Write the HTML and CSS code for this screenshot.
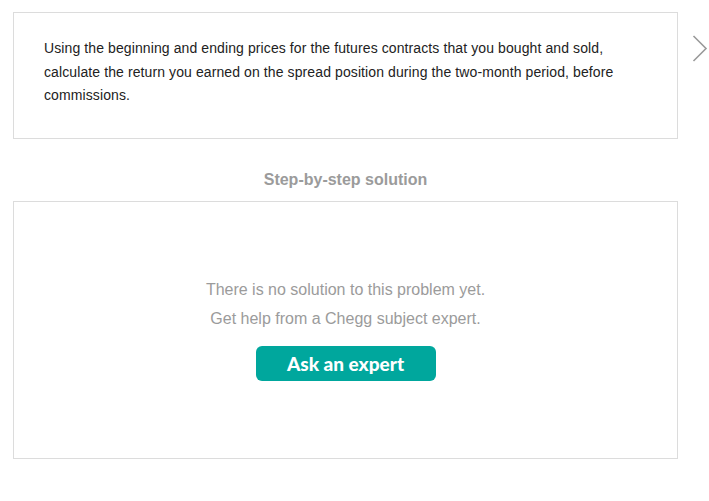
FILE: index.html
```html
<!DOCTYPE html>
<html>
<head>
<meta charset="utf-8">
<link rel="stylesheet" href="styles.css">
</head>
<body>
<div class="page">
  <div class="row">
    <div class="question">
      <p>Using the beginning and ending prices for the futures contracts that you bought and sold, calculate the return you earned on the spread position during the two-month period, before commissions.</p>
    </div>
    <svg class="chevron" width="16" height="27" viewBox="0 0 16 27"><path d="M1.5 1 L14 13.5 L1.5 26" fill="none" stroke="#9a9a9a" stroke-width="1.6"/></svg>
  </div>
  <h2 class="heading">Step-by-step solution</h2>
  <div class="solution">
    <p class="msg">There is no solution to this problem yet.</p>
    <p class="msg">Get help from a Chegg subject expert.</p>
    <button class="ask">Ask an expert</button>
  </div>
</div>
</body>
</html>
```

FILE: styles.css
```css
* { box-sizing: border-box; }
html, body { margin: 0; padding: 0; background: #fff; }
body { font-family: "Liberation Sans", Arial, sans-serif; }
.page { padding: 12px 0 0 13px; width: 709px; }
.row { display: flex; align-items: flex-start; }
.question {
  width: 665px;
  height: 127px;
  border: 1px solid #dcdcdc;
  padding: 24px 30px 0 30px;
}
.question p {
  margin: 0;
  max-width: 575px;
  font-size: 14px;
  letter-spacing: 0.1px;
  line-height: 23.5px;
  color: #222;
}
.chevron { margin: 23px 0 0 14px; }
.heading {
  margin: 31px 0 11px 0;
  width: 665px;
  text-align: center;
  font-size: 16px;
  line-height: 20px;
  font-weight: bold;
  color: #9b9b9b;
}
.solution {
  width: 665px;
  height: 258px;
  border: 1px solid #dcdcdc;
  padding-top: 73px;
  display: flex;
  flex-direction: column;
  align-items: center;
}
.msg {
  margin: 0;
  font-size: 16px;
  line-height: 29px;
  color: #9b9b9b;
}
.ask {
  margin-top: 13px;
  width: 180px;
  height: 35px;
  border: none;
  border-radius: 6px;
  background: #00a79d;
  color: #fff;
  font-family: Lato, "Liberation Sans", sans-serif;
  font-weight: 900;
  font-size: 19px;
  padding: 0;
  line-height: 35px;
}
```
